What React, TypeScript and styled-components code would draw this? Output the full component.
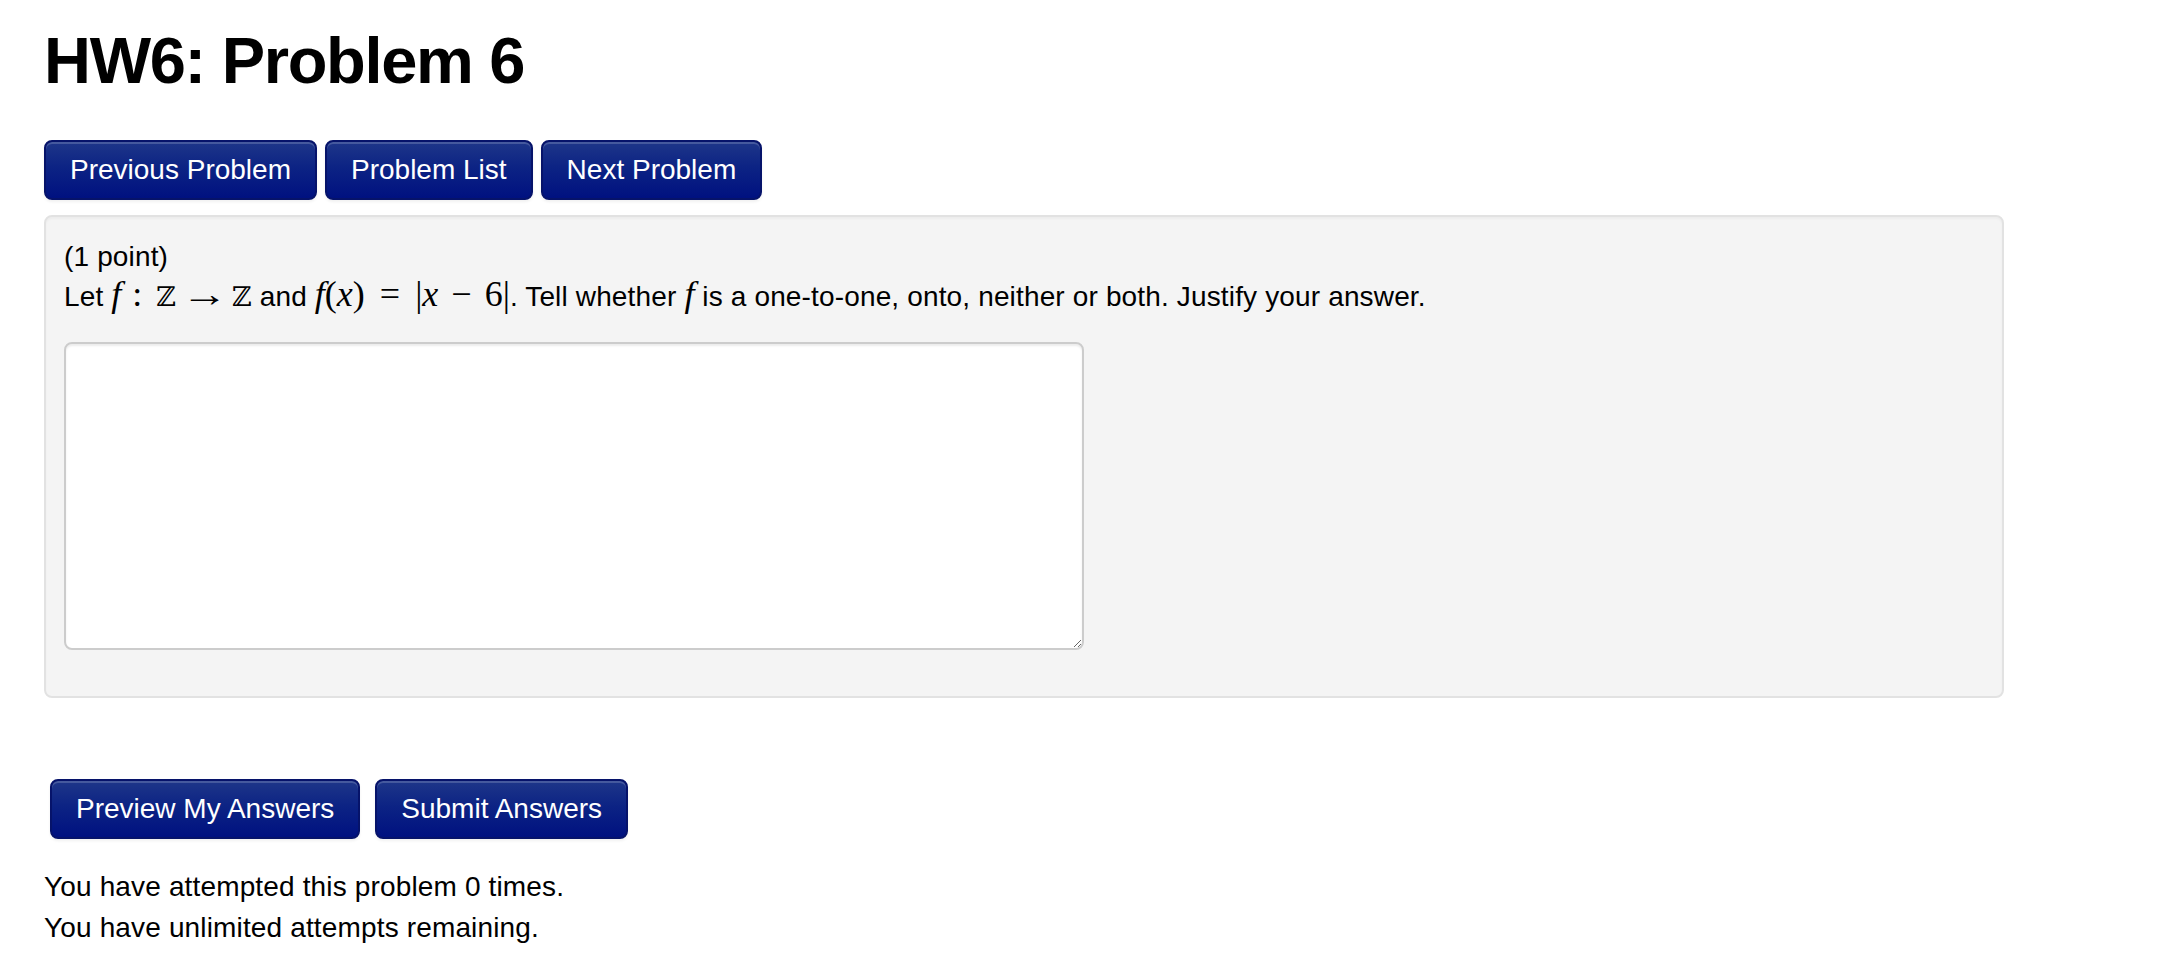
import React from 'react';
import styled, { createGlobalStyle } from 'styled-components';

const GlobalStyle = createGlobalStyle`
  html, body {
    margin: 0;
    padding: 0;
    background: #ffffff;
  }
  body {
    font-family: 'Liberation Sans', Arial, Helvetica, sans-serif;
    color: #000000;
  }
`;

const Page = styled.div`
  padding: 25px 0 0 44px;
`;

const Title = styled.h1`
  margin: 0;
  font-size: 65px;
  line-height: 72px;
  font-weight: 700;
  letter-spacing: -1.3px;
  color: #000;
`;

const ButtonRow = styled.div<{ $top: number; $gap: number; $indent?: number }>`
  display: flex;
  gap: ${({ $gap }) => $gap}px;
  margin-top: ${({ $top }) => $top}px;
  margin-left: ${({ $indent }) => $indent || 0}px;
`;

const Button = styled.button`
  box-sizing: border-box;
  height: 60px;
  padding: 8px 24px;
  font-family: 'Liberation Sans', Arial, sans-serif;
  font-size: 28px;
  line-height: 40px;
  color: #ffffff;
  background: linear-gradient(to bottom, #1e3689 0%, #0c2384 45%, #001180 100%);
  border: 2px solid #06136a;
  border-radius: 8px;
  box-shadow: inset 0 2px 0 rgba(255, 255, 255, 0.18), 0 2px 3px rgba(0, 0, 0, 0.06);
  cursor: pointer;
  white-space: nowrap;
`;

const Well = styled.div`
  box-sizing: border-box;
  width: 1960px;
  margin-top: 15px;
  padding: 20px 18px 46px 18px;
  background: #f4f4f4;
  border: 2px solid #e2e2e2;
  border-radius: 8px;
  box-shadow: inset 0 2px 2px rgba(0, 0, 0, 0.03);
`;

const Text = styled.div`
  font-size: 28px;
  line-height: 40px;
  letter-spacing: 0.15px;
`;

// inline formula, spaced roughly the way MathJax sets it
const Math = styled.span`
  font-family: 'Liberation Serif', 'Times New Roman', serif;
  font-size: 36px;
  line-height: 0;
  letter-spacing: 0;
  white-space: nowrap;
`;

const Var = styled.i`
  font-style: italic;
`;

const Set = styled.span`
  font-family: 'DejaVu Serif', 'DejaVu Sans', serif;
  font-size: 27px;
`;

const Op = styled.span<{ $l: number; $r: number }>`
  margin: 0 ${({ $r }) => $r}px 0 ${({ $l }) => $l}px;
`;

const Arrow = styled.span`
  display: inline-block;
  margin: 0 6px 0 8px;
  transform: scaleX(1.3);
  transform-origin: center;
  padding: 0 3px;
`;

const Answer = styled.textarea`
  display: block;
  box-sizing: border-box;
  width: 1020px;
  height: 308px;
  margin-top: 25px;
  padding: 8px 12px;
  font-family: 'Liberation Sans', Arial, sans-serif;
  font-size: 28px;
  background: #ffffff;
  border: 2px solid #cccccc;
  border-radius: 8px;
  box-shadow: inset 0 2px 2px rgba(0, 0, 0, 0.075);
  resize: both;
  outline: none;
`;

const Attempts = styled.div`
  margin-top: 27px;
  font-size: 28px;
  line-height: 41px;
  letter-spacing: 0.15px;
`;

export default function App() {
  return (
    <>
      <GlobalStyle />
      <Page>
        <Title>HW6: Problem 6</Title>
        <ButtonRow $top={43} $gap={8}>
          <Button>Previous Problem</Button>
          <Button>Problem List</Button>
          <Button>Next Problem</Button>
        </ButtonRow>
        <Well>
          <Text>(1 point)</Text>
          <Text>
            Let{' '}
            <Math>
              <Var>f</Var>
              <Op $l={11} $r={14}>:</Op>
              <Set>ℤ</Set>
              <Arrow>→</Arrow>
              <Set>ℤ</Set>
            </Math>{' '}
            and{' '}
            <Math>
              <Var>f</Var>(<Var>x</Var>)<Op $l={15} $r={15}>=</Op>|<Var>x</Var>
              <Op $l={13} $r={13}>−</Op>6|
            </Math>
            . Tell whether <Math><Var>f</Var></Math> is a one-to-one, onto, neither or both.
            Justify your answer.
          </Text>
          <Answer />
        </Well>
        <ButtonRow $top={81} $gap={15} $indent={6}>
          <Button>Preview My Answers</Button>
          <Button>Submit Answers</Button>
        </ButtonRow>
        <Attempts>
          You have attempted this problem 0 times.
          <br />
          You have unlimited attempts remaining.
        </Attempts>
      </Page>
    </>
  );
}
